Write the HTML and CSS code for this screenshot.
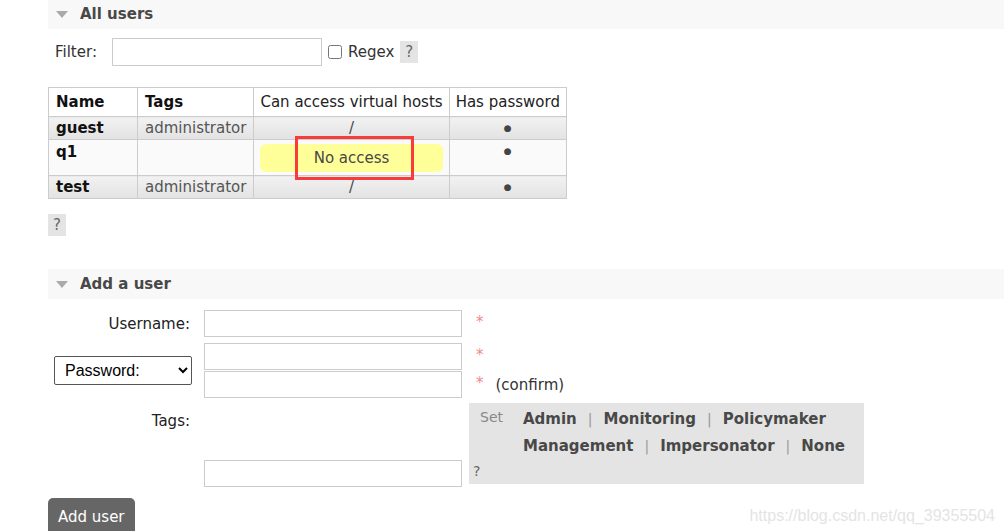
FILE: index.html
```html
<!DOCTYPE html>
<html lang="en">
<head>
  <meta charset="UTF-8" />
  <title>Users</title>
  <link rel="stylesheet" href="styles.css">
</head>
<body>

  <div class="main">

    <!-- All users -->
    <div class="section first">
      <h2 class="section-head"><span class="arrow"></span>All users</h2>

      <div class="filter">
        <label>Filter:</label>
        <input type="text" class="filter-input" />
        <label class="regex"><input type="checkbox" /> Regex</label>
        <span class="help">?</span>
      </div>

      <table class="list">
        <thead>
          <tr>
            <th class="c-name bold">Name</th>
            <th class="c-tags bold">Tags</th>
            <th class="c-vhost">Can access virtual hosts</th>
            <th class="c-pass">Has password</th>
          </tr>
        </thead>
        <tbody>
          <tr class="alt1">
            <td class="name">guest</td>
            <td class="tags">administrator</td>
            <td class="center">/</td>
            <td class="center dot">&#9679;</td>
          </tr>
          <tr class="alt2">
            <td class="name">q1</td>
            <td class="tags"></td>
            <td class="center">
              <div class="warning">
                No access
                <span class="mark"></span>
              </div>
            </td>
            <td class="center dot">&#9679;</td>
          </tr>
          <tr class="alt1">
            <td class="name">test</td>
            <td class="tags">administrator</td>
            <td class="center">/</td>
            <td class="center dot">&#9679;</td>
          </tr>
        </tbody>
      </table>

      <div class="help-wrap"><span class="help">?</span></div>
    </div>

    <!-- Add a user -->
    <div class="section">
      <h2 class="section-head"><span class="arrow"></span>Add a user</h2>

      <div class="form">
        <div class="form-row">
          <label class="form-label">Username:</label>
          <div class="form-field">
            <input type="text" class="text" />
            <span class="mand">*</span>
          </div>
        </div>

        <div class="form-row pw-row">
          <div class="form-label">
            <select class="pw-select">
              <option>Password:</option>
              <option>Hashed password:</option>
              <option>No password</option>
            </select>
          </div>
          <div class="form-field stack">
            <div class="line">
              <input type="password" class="text" />
              <span class="mand">*</span>
            </div>
            <div class="line">
              <input type="password" class="text" />
              <span class="mand">*</span>
              <span class="confirm">(confirm)</span>
            </div>
          </div>
        </div>

        <div class="form-row tags-row">
          <label class="form-label top">Tags:</label>
          <div class="form-field bottom">
            <input type="text" class="text" />
            <div class="tag-box">
              <div class="tag-set">
                <span class="set">Set</span>
                <div class="tag-links">
                  <div class="tag-line">
                    <span class="tag">Admin</span><span class="sep">|</span>
                    <span class="tag">Monitoring</span><span class="sep">|</span>
                    <span class="tag">Policymaker</span>
                  </div>
                  <div class="tag-line">
                    <span class="tag">Management</span><span class="sep">|</span>
                    <span class="tag">Impersonator</span><span class="sep">|</span>
                    <span class="tag">None</span>
                  </div>
                </div>
              </div>
              <span class="tag-help">?</span>
            </div>
          </div>
        </div>

        <button type="submit" class="add-btn">Add user</button>
      </div>
    </div>

  </div>

  <div class="watermark">https://blog.csdn.net/qq_39355504</div>

</body>
</html>
```

FILE: styles.css
```css
html, body {
  overflow: hidden;
}
body {
  margin: 0;
  font-family: "DejaVu Sans", Verdana, sans-serif;
  font-size: 15px;
  color: #333;
  background: #fff;
}
.main {
  padding-left: 48px;
}
.first {
  margin-top: -1px;
}
.section-head {
  margin: 0;
  height: 30px;
  line-height: 30px;
  padding-left: 32px;
  position: relative;
  background: #f8f8f8;
  color: #484848;
  font-size: 15px;
  font-weight: bold;
}
.arrow {
  position: absolute;
  left: 8px;
  top: 12px;
  width: 0;
  height: 0;
  border-left: 6px solid transparent;
  border-right: 6px solid transparent;
  border-top: 7px solid #aaa;
}

/* filter */
.filter {
  display: flex;
  align-items: center;
  margin-top: 9px;
  padding-left: 7px;
}
.filter-input {
  width: 210px;
  height: 28px;
  box-sizing: border-box;
  margin: 0 0 0 15px;
  border: 1px solid #ccc;
}
.regex {
  display: flex;
  align-items: center;
  margin-left: 6px;
  gap: 6px;
}
.regex input {
  margin: 0;
  width: 14px;
  height: 14px;
}
.help {
  display: inline-block;
  background: #e4e4e4;
  color: #666;
  padding: 1px 5px;
  margin-left: 6px;
  line-height: 20px;
}
.help-wrap {
  margin-top: 15px;
  line-height: 22px;
}
.help-wrap .help {
  margin-left: 0;
  vertical-align: top;
}

/* users table */
.list {
  border-collapse: collapse;
  margin-top: 21px;
}
.list th, .list td {
  border: 1px solid #ccc;
  padding: 2px 7px;
  line-height: 18px;
  vertical-align: top;
  white-space: nowrap;
}
.list th {
  font-weight: normal;
  text-align: left;
  padding: 5px 7px;
  background: #fff;
  color: #222;
}
.list th.bold {
  font-weight: bold;
  color: #111;
}
.list th.c-vhost {
  padding: 5px 6px;
}
.list th.c-pass {
  padding: 5px 6px 5px 6px;
}
.c-name { width: 74px; }
.c-tags { width: 99px; }
.name {
  font-weight: bold;
  color: #111;
}
.tags {
  color: #555;
}
.center {
  text-align: center;
  color: #484848;
}
.dot {
  font-size: 9px;
  color: #444;
}
.alt1 td {
  background: linear-gradient(#f2f2f2, #e2e2e2);
}
.alt2 td {
  background: #fafafa;
}
.alt2 td.name {
  padding-top: 3px;
}
.alt2 td.center {
  padding: 4px 6px 3px;
}
.alt2 td.dot {
  padding: 2px 7px;
}
.warning {
  position: relative;
  background: #ffff99;
  border-radius: 6px;
  height: 28px;
  line-height: 28px;
  color: #484848;
  font-size: 15px;
}
.mark {
  position: absolute;
  left: 35px;
  top: -8px;
  width: 119px;
  height: 44px;
  box-sizing: border-box;
  border: 3px solid #f83c3c;
}

/* add user */
.section + .section {
  margin-top: 33px;
}
.form {
  margin-top: 11px;
}
.form-row {
  display: flex;
  align-items: center;
  margin-bottom: 6px;
}
.form-row.pw-row {
  margin-bottom: 5px;
}
.form-label {
  width: 156px;
  box-sizing: border-box;
  padding-right: 14px;
  text-align: right;
  color: #222;
}
.form-label.top {
  align-self: flex-start;
  padding-top: 9px;
}
.pw-row .form-label {
  padding-right: 12px;
}
.form-field {
  display: flex;
  align-items: center;
}
.form-field.stack {
  flex-direction: column;
  align-items: flex-start;
  gap: 1px;
}
.form-field.bottom {
  align-items: flex-end;
}
.line {
  display: flex;
  align-items: center;
}
.text {
  width: 258px;
  height: 27px;
  box-sizing: border-box;
  margin: 0;
  border: 1px solid #ccc;
}
.mand {
  color: #f08a8a;
  margin-left: 14px;
  position: relative;
  top: -2px;
}
.confirm {
  margin-left: 12px;
  color: #333;
}
.pw-select {
  width: 138px;
  height: 29px;
  font-family: "Liberation Sans", Arial, sans-serif;
  font-size: 16px;
  color: #000;
  background: #fff;
  border: 1px solid #555;
  border-radius: 2px;
  padding-left: 6px;
}

/* tags */
.tag-box {
  width: 395px;
  margin-left: 7px;
  margin-bottom: 3px;
  background: #e4e4e4;
  padding: 3px 0 2px 4px;
  box-sizing: border-box;
}
.tag-set {
  display: flex;
}
.set {
  color: #888;
  font-size: 14px;
  margin-left: 7px;
  line-height: 22px;
  width: 43px;
}
.tag-line {
  display: flex;
  gap: 11px;
  line-height: 27px;
}
.tag {
  font-weight: bold;
  color: #484848;
}
.sep {
  color: #999;
  font-size: 14px;
}
.tag-help {
  display: block;
  color: #666;
  font-size: 14px;
  line-height: 22px;
}

.add-btn {
  display: block;
  margin-top: 11px;
  background: #666;
  color: #fff;
  border: none;
  border-radius: 5px;
  padding: 0 10px;
  height: 38px;
  font-family: "DejaVu Sans", Verdana, sans-serif;
  font-size: 15px;
  cursor: pointer;
}

.watermark {
  position: absolute;
  right: 9px;
  bottom: 6px;
  font-family: "Liberation Sans", Arial, sans-serif;
  font-size: 16px;
  color: #e4e4e4;
}
```
